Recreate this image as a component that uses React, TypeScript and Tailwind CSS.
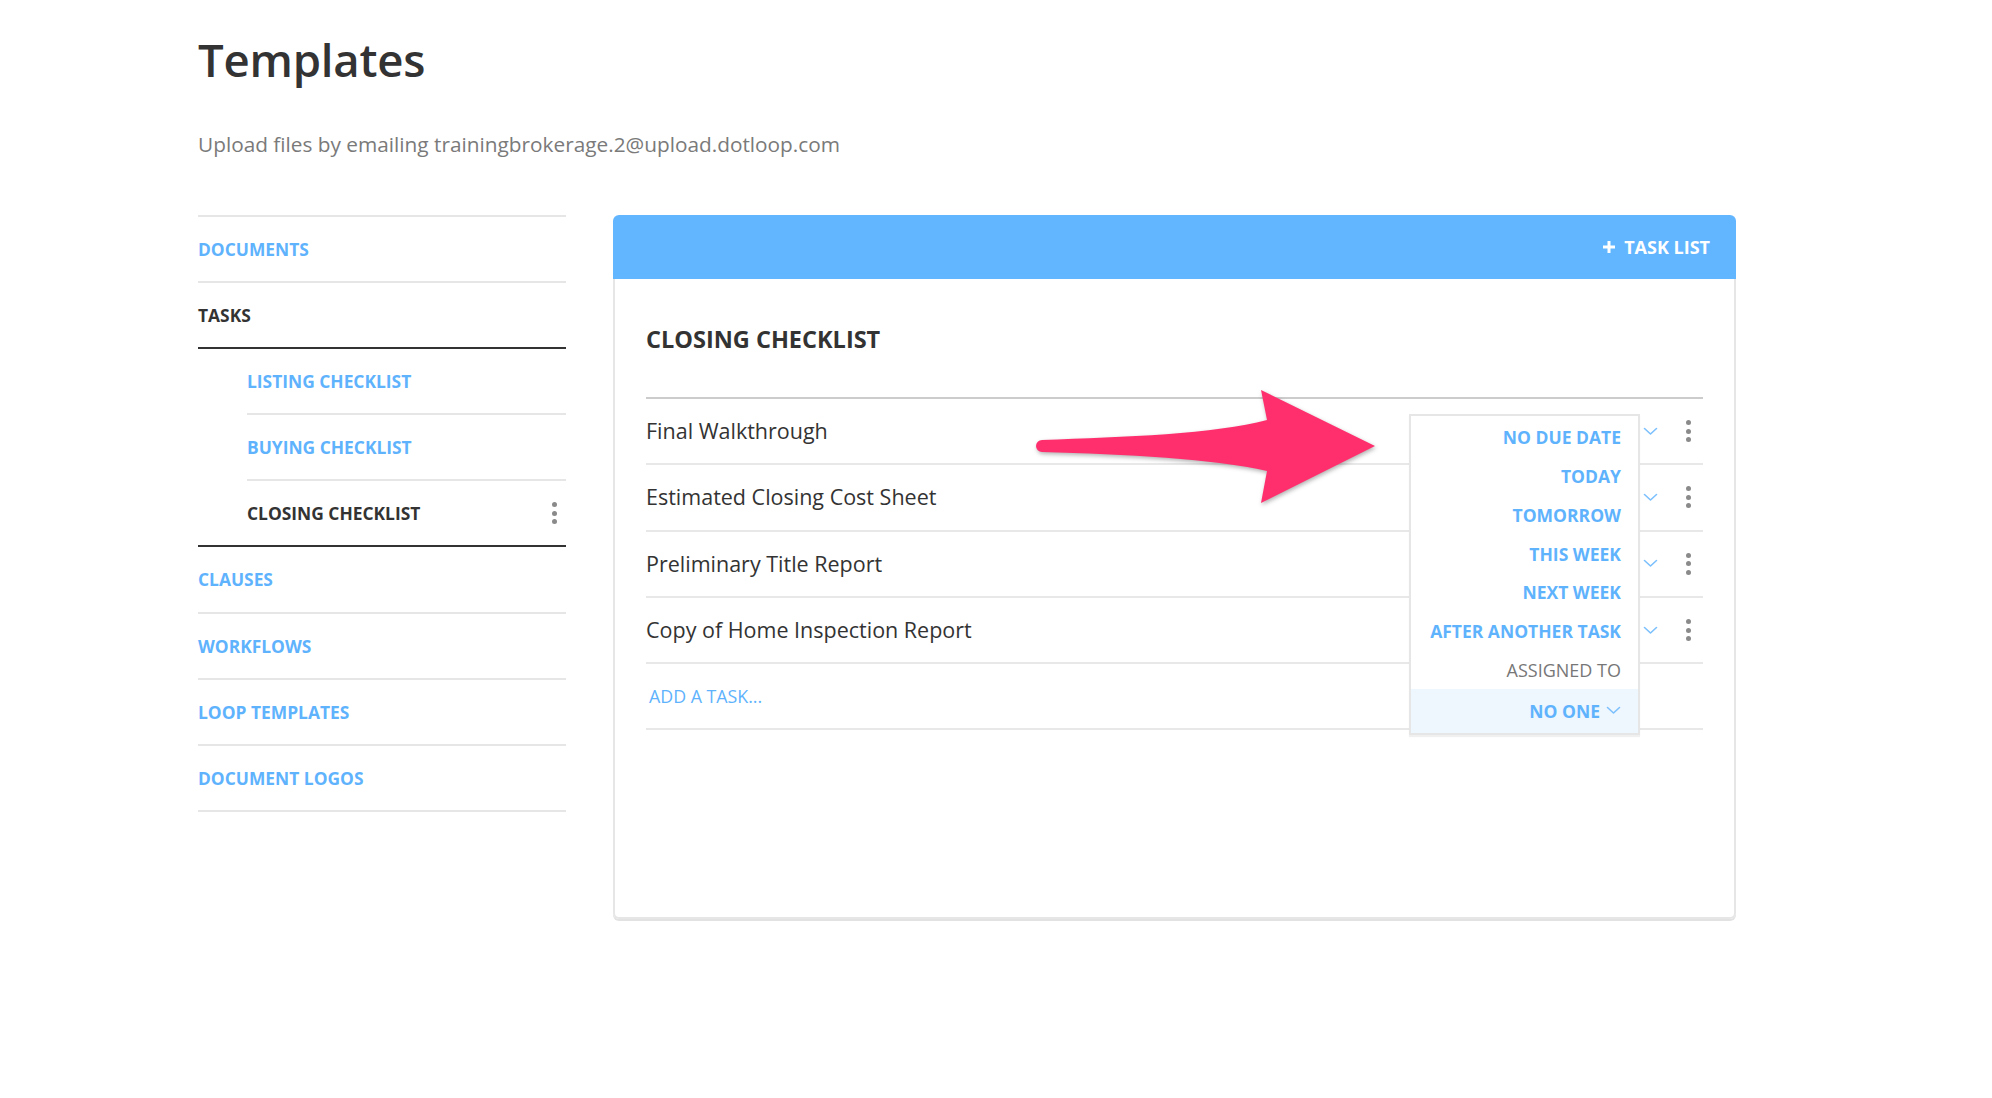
import React from 'react';

const BLUE = 'text-[#5fb3fd]';

const Dots = () => (
  <div className="flex flex-col items-center gap-[3.5px]">
    <span className="block w-[5px] h-[5px] rounded-full bg-[#8a8a8a]" />
    <span className="block w-[5px] h-[5px] rounded-full bg-[#8a8a8a]" />
    <span className="block w-[5px] h-[5px] rounded-full bg-[#8a8a8a]" />
  </div>
);

const Chevron = ({ className = '' }: { className?: string }) => (
  <svg width="15" height="9" viewBox="0 0 15 9" className={className}>
    <polyline points="1.5,1.5 7.5,7 13.5,1.5" fill="none" stroke="#7cc0fd" strokeWidth="1.6" strokeLinecap="round" strokeLinejoin="round" />
  </svg>
);

const navRow = 'h-[66.1px] flex items-center border-b-2 text-[17.4px] font-bold';

const tasks = ['Final Walkthrough', 'Estimated Closing Cost Sheet', 'Preliminary Title Report', 'Copy of Home Inspection Report'];

const dueOptions = ['NO DUE DATE', 'TODAY', 'TOMORROW', 'THIS WEEK', 'NEXT WEEK', 'AFTER ANOTHER TASK'];

export default function App() {
  return (
    <div className="relative min-h-[1098px] bg-white font-['Open_Sans',sans-serif] text-[#333]">
      <div className="pl-[198px] pt-[30px]">
        <h1 className="text-[45.5px] leading-[58px] font-semibold tracking-[-0.2px] text-[#333]">Templates</h1>
        <p className="mt-[42px] text-[20.8px] leading-[28px] text-[#7a7a7a]">
          Upload files by emailing trainingbrokerage.2@upload.dotloop.com
        </p>

        <div className="mt-[57px] flex items-start gap-[47px]">
          {/* side nav */}
          <nav className="w-[368px] border-t-2 border-[#e6e6e6]">
            <div className={`${navRow} border-[#e6e6e6] ${BLUE}`}>DOCUMENTS</div>
            <div className={`${navRow} border-[#333]`}>TASKS</div>
            <div className="border-b-2 border-[#333]">
              <div className="pl-[49px]">
                <div className={`${navRow} border-[#e6e6e6] ${BLUE}`}>LISTING CHECKLIST</div>
                <div className={`${navRow} border-[#e6e6e6] ${BLUE}`}>BUYING CHECKLIST</div>
                <div className="h-[64.1px] flex items-center justify-between pr-[9px] text-[17.4px] font-bold text-[#333]">
                  <span>CLOSING CHECKLIST</span>
                  <Dots />
                </div>
              </div>
            </div>
            <div className={`${navRow} border-[#e6e6e6] ${BLUE}`}>CLAUSES</div>
            <div className={`${navRow} border-[#e6e6e6] ${BLUE}`}>WORKFLOWS</div>
            <div className={`${navRow} border-[#e6e6e6] ${BLUE}`}>LOOP TEMPLATES</div>
            <div className={`${navRow} border-[#e6e6e6] ${BLUE}`}>DOCUMENT LOGOS</div>
          </nav>

          {/* panel */}
          <section className="w-[1123px] h-[704px] flex flex-col">
            <div className="h-[64px] rounded-t-[6px] bg-[#62b5ff] flex items-center justify-end pr-[26px]">
              <div className="flex items-center gap-[8px] text-white text-[18px] font-bold">
                <svg width="14" height="14" viewBox="0 0 14 14">
                  <path d="M7 1v12M1 7h12" stroke="white" strokeWidth="3" />
                </svg>
                <span>TASK LIST</span>
              </div>
            </div>
            <div className="flex-1 border-2 border-t-0 border-[#e6e6e6] rounded-b-[6px] shadow-[0_2px_0_#e2e2e2] px-[31px] pt-[45px]">
              <h2 className="text-[23.5px] leading-[30px] font-bold text-[#333]">CLOSING CHECKLIST</h2>
              <div className="relative mt-[43px] border-t-2 border-[#cccccc]">
                {tasks.map((t) => (
                  <div key={t} className="h-[66.3px] flex items-center justify-between border-b-2 border-[#e8e8e8] pr-[12px]">
                    <span className="text-[21.5px] text-[#333]">{t}</span>
                    <div className="flex items-center gap-[28px]">
                      <Chevron />
                      <Dots />
                    </div>
                  </div>
                ))}
                <div className="h-[66.3px] flex items-center border-b-2 border-[#e8e8e8] pl-[3px]">
                  <span className="text-[17.8px] text-[#5fb3fd]">ADD A TASK...</span>
                </div>

                {/* due date dropdown */}
                <div className="absolute top-[15px] right-[63px] w-[231px] pt-[2px] bg-white border-2 border-[#e6e6e6] shadow-[0_2px_1px_rgba(0,0,0,0.06)] z-10">
                  {dueOptions.map((o) => (
                    <div key={o} className="h-[38.8px] flex items-center justify-end pr-[17px] text-[17.5px] font-bold text-[#5fb3fd]">
                      {o}
                    </div>
                  ))}
                  <div className="h-[38.5px] flex items-center justify-end pr-[17px] text-[18px] text-[#777]">ASSIGNED TO</div>
                  <div className="h-[44px] flex items-center justify-end gap-[6px] pr-[17px] pb-[1px] bg-[#eef6fe] text-[17.5px] font-bold text-[#5fb3fd]">
                    <span>NO ONE</span>
                    <Chevron />
                  </div>
                </div>
              </div>
            </div>
          </section>
        </div>
      </div>

      {/* annotation arrow */}
      <svg
        className="absolute left-[1025px] top-[383px] z-20 drop-shadow-[1px_2px_2px_rgba(0,0,0,0.3)]"
        width="360"
        height="130"
        viewBox="0 0 360 130"
      >
        <path
          d="M17 57 C100 54 190 51 242 37 L236 7 L350 63 L236 120 L242 88 C190 76 100 71 17 69 A6 6 0 0 1 17 57 Z"
          fill="#ff2f6e"
        />
      </svg>
    </div>
  );
}
